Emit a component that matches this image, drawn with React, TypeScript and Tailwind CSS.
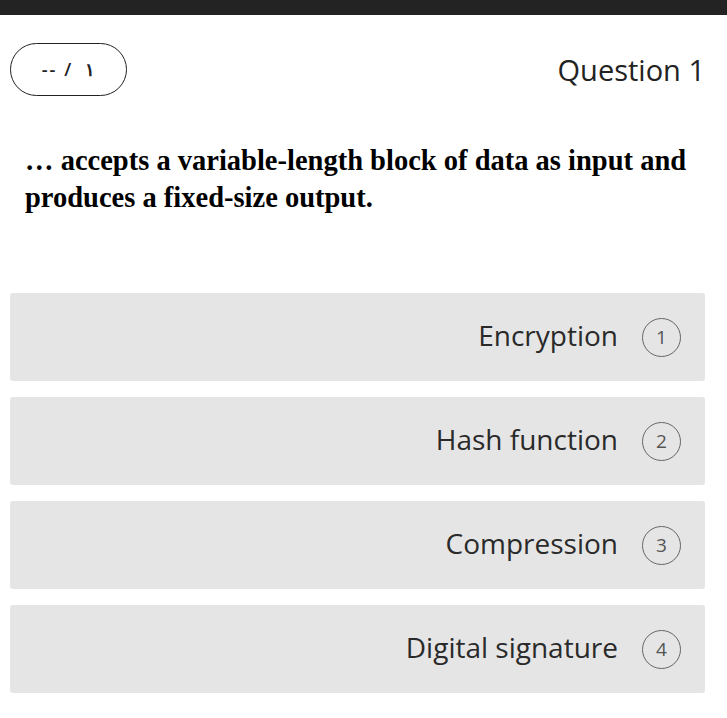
import React from "react";

const options = [
  { label: "Encryption", n: 1 },
  { label: "Hash function", n: 2 },
  { label: "Compression", n: 3 },
  { label: "Digital signature", n: 4 },
];

export default function App() {
  return (
    <div className="w-[727px] h-[718px] bg-white overflow-hidden font-['Open_Sans',sans-serif]">
      <div className="h-[15px] bg-[#232323]" />

      <div className="flex items-center justify-between pl-[10px] pr-[22px] mt-[28px]">
        <div className="w-[117px] h-[53px] rounded-full border-[1.5px] border-[#222] flex items-center justify-center text-[18px] font-semibold text-[#222]">
          <span className="tracking-[2px]">--</span>
          <span className="ml-[7px]">/</span>
          <span className="ml-[14px]">١</span>
        </div>
        <p className="text-[29px] text-[#222] leading-none">Question 1</p>
      </div>

      <div className="px-[25px] mt-[46px] font-['Liberation_Serif',serif] font-bold text-[28.5px] leading-[37px] text-black">
        <p>… accepts a variable-length block of data as input and</p>
        <p>produces a fixed-size output.</p>
      </div>

      <div className="flex flex-col gap-[16px] px-[10px] mt-[77px] w-[715px]">
        {options.map((o) => (
          <div
            key={o.n}
            className="h-[88px] rounded-[3px] bg-[#e5e5e5] flex items-center justify-end pr-[24px] gap-[24px]"
          >
            <span className="text-[28px] text-[#2a2a2a] -mt-[4px]">{o.label}</span>
            <span className="w-[39px] h-[39px] rounded-full border-[1.5px] border-[#666] flex items-center justify-center text-[19px] text-[#555]">
              {o.n}
            </span>
          </div>
        ))}
      </div>
    </div>
  );
}
